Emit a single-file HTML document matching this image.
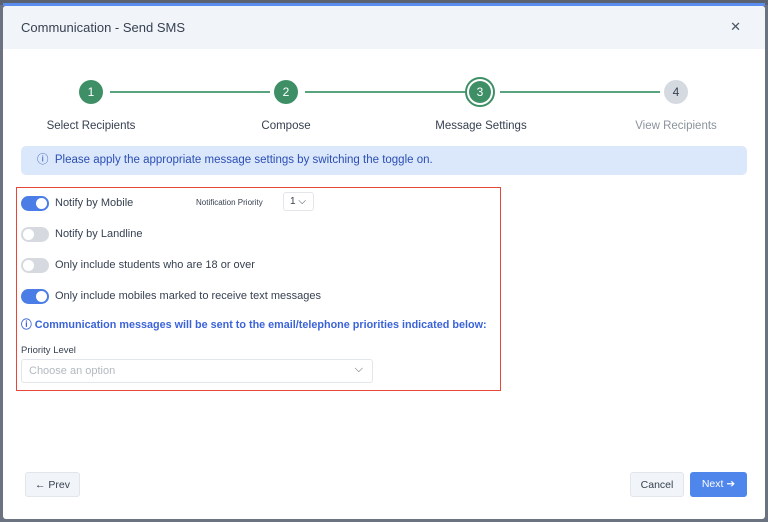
<!DOCTYPE html>
<html><head><style>
*{box-sizing:border-box;margin:0;padding:0}
body{width:768px;height:522px;background:#6b7280;font-family:"Liberation Sans",sans-serif;position:relative;overflow:hidden}
.bar{position:absolute;left:0;top:0;width:768px;height:5px;background:#5a6170}
.blue{position:absolute;left:3px;top:3px;width:762px;height:3px;background:#5b8def}
.modal{position:absolute;left:3px;top:6px;width:762px;height:513px;background:#fff;border-radius:3px;overflow:hidden}
.hdr{height:43px;background:#f1f5f9;position:relative}
.hdr .t{position:absolute;left:18px;top:14px;font-size:13px;color:#374151}
.hdr .x{position:absolute;right:24px;top:13px;font-size:13px;color:#4b5563}
.c{position:absolute;width:24px;height:24px;border-radius:50%;background:#3f8f66;color:#fff;font-size:12px;text-align:center;line-height:24px}
.line{position:absolute;height:2px;background:#5aa37f;top:85px}
.lbl{position:absolute;top:114px;font-size:11.5px;color:#374151;width:160px;text-align:center}
.info{position:absolute;left:18px;top:140px;width:726px;height:29px;background:#dbe7fb;border-radius:5px;font-size:11.5px;color:#2b4fb3;line-height:29px;padding-left:16px}
.box{position:absolute;left:13px;top:181px;width:485px;height:204px;border:1.5px solid #e5483b}
.tg{position:absolute;left:18px;width:28px;height:15px;border-radius:8px;background:#d6dae0}
.tg::after{content:"";position:absolute;top:2px;left:2px;width:11px;height:11px;border-radius:50%;background:#fff}
.tg.on{background:#4a7de5}.tg.on::after{left:15px}
.tl{position:absolute;left:52px;font-size:11px;color:#374151}
.btn{position:absolute;top:466px;height:25px;border-radius:3px;font-size:10.5px;line-height:25px;text-align:center}
</style></head><body>
<div class="bar"></div><div class="blue"></div>
<div class="modal">
<div class="hdr"><div class="t">Communication - Send SMS</div><div class="x">✕</div></div>
<div class="line" style="left:107px;width:160px"></div>
<div class="line" style="left:302px;width:160px"></div>
<div class="line" style="left:497px;width:160px"></div>
<div class="c" style="left:76px;top:74px">1</div>
<div class="c" style="left:271px;top:74px">2</div>
<div class="c" style="left:462px;top:71px;width:30px;height:30px;background:#fff;border:2px solid #3f8f66;padding:2px"><div style="width:22px;height:22px;border-radius:50%;background:#3f8f66;line-height:22px">3</div></div>
<div class="c" style="left:661px;top:74px;background:#d5d9e0;color:#374151">4</div>
<div class="lbl" style="left:8px">Select Recipients</div>
<div class="lbl" style="left:203px">Compose</div>
<div class="lbl" style="left:398px">Message Settings</div>
<div class="lbl" style="left:593px;color:#8b929c">View Recipients</div>
<div class="info">ⓘ&nbsp; Please apply the appropriate message settings by switching the toggle on.</div>
<div class="box"></div>
<div class="tg on" style="top:190px"></div><div class="tl" style="top:191px">Notify by Mobile</div>
<div style="position:absolute;left:193px;top:192px;font-size:8px;color:#374151">Notification Priority</div>
<div style="position:absolute;left:280px;top:186px;width:31px;height:19px;border:1px solid #e2e5ea;border-radius:3px;font-size:10px;color:#374151;padding:3px 0 0 6px">1 ⌵</div>
<div class="tg" style="top:221px"></div><div class="tl" style="top:222px">Notify by Landline</div>
<div class="tg" style="top:252px"></div><div class="tl" style="top:253px">Only include students who are 18 or over</div>
<div class="tg on" style="top:283px"></div><div class="tl" style="top:284px">Only include mobiles marked to receive text messages</div>
<div style="position:absolute;left:18px;top:310px;font-size:10.8px;font-weight:bold;color:#3b63d9;white-space:nowrap">ⓘ Communication messages will be sent to the email/telephone priorities indicated below:</div>
<div style="position:absolute;left:18px;top:339px;font-size:9.5px;color:#374151">Priority Level</div>
<div style="position:absolute;left:18px;top:353px;width:352px;height:24px;border:1px solid #e2e5ea;border-radius:3px;font-size:11px;color:#b3b8c0;padding:5px 0 0 7px">Choose an option<span style="position:absolute;right:9px;top:3px;color:#555">⌵</span></div>
<div class="btn" style="left:22px;width:55px;background:#f1f4f8;border:1px solid #e2e5ea;color:#374151">← Prev</div>
<div class="btn" style="left:627px;width:54px;background:#f1f4f8;border:1px solid #e2e5ea;color:#374151">Cancel</div>
<div class="btn" style="left:687px;width:57px;background:#4f86ec;color:#fff">Next ➔</div>
</div>
</body></html>
